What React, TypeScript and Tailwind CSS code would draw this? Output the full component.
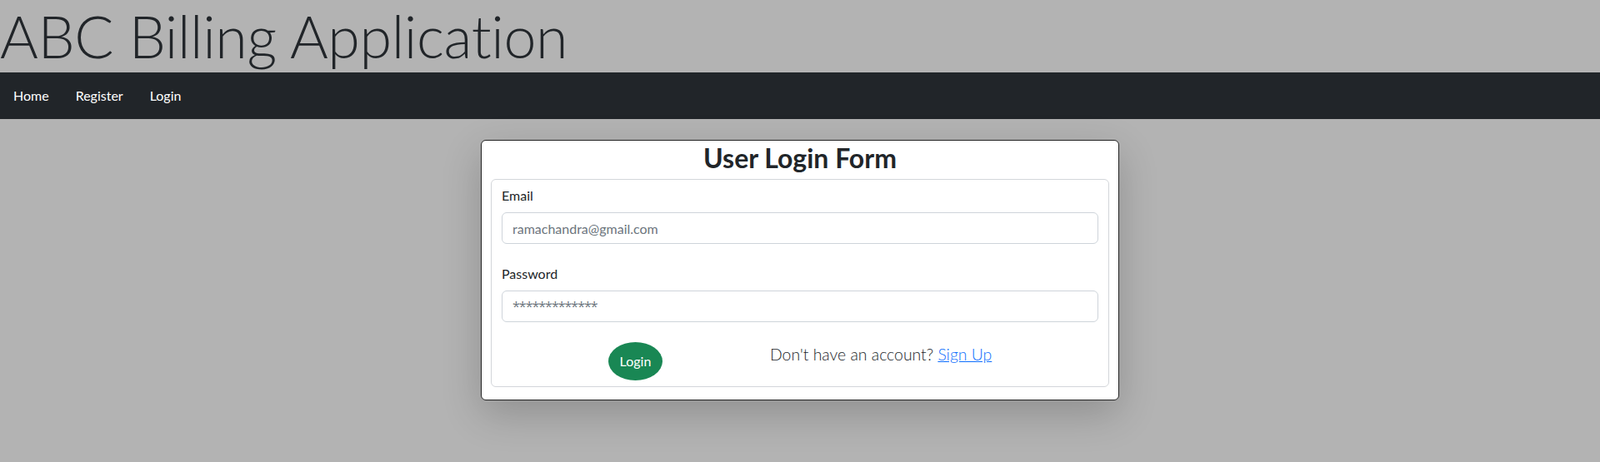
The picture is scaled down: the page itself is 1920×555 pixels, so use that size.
const FONT = "font-['Lato','Open_Sans',sans-serif]"

export default function App() {
  return (
    <div className={`min-h-[555px] bg-[#b3b3b3] text-[#212529] ${FONT}`}>
      <h1 className="text-[70px] leading-[87px] font-light tracking-[-0.4px]">ABC Billing Application</h1>

      {/* Navbar */}
      <nav className="h-[56px] bg-[#212529] flex items-center pl-4 gap-8 text-[16px] text-white">
        <a href="#">Home</a>
        <a href="#">Register</a>
        <a href="#">Login</a>
      </nav>

      {/* Login card */}
      <div className="mx-auto mt-[25px] w-[766px] bg-white border border-[#222] rounded-[6px] px-[11px] pb-[15px] shadow-[0_16px_48px_rgba(0,0,0,0.2)]">
        <h2 className="text-[32px] font-bold leading-[42px] text-center mb-[4px]">User Login Form</h2>

        <div className="border border-[#d3d6da] rounded-[6px] px-[12px] pt-[7px] pb-[7px]">
          <Field label="Email" placeholder="ramachandra@gmail.com" />
          <Field label="Password" placeholder="*************" mono />

          <div className="flex items-start">
            <button className="ml-[128px] w-[65px] h-[46px] rounded-[50%] bg-[#198754] text-white text-[16px]">
              Login
            </button>
            <p className="ml-[129px] text-[19.4px] leading-[30px] font-light text-[#212529]">
              Don't have an account?{' '}
              <a href="#" className="text-[#0d6efd] underline">Sign Up</a>
            </p>
          </div>
        </div>
      </div>
    </div>
  )
}

function Field({ label, placeholder, mono }: { label: string; placeholder: string; mono?: boolean }) {
  return (
    <div className="mb-[24px]">
      <label className="block text-[16px] leading-[24px] mb-[8px]">{label}</label>
      <input
        type="text"
        placeholder={placeholder}
        className={`block w-full h-[38px] px-[12px] border border-[#ced4da] rounded-[6px] text-[16px] placeholder:text-[#6c757d] outline-none ${mono ? "font-['Open_Sans',sans-serif] text-[12px] tracking-[-1px]" : ''}`}
      />
    </div>
  )
}
